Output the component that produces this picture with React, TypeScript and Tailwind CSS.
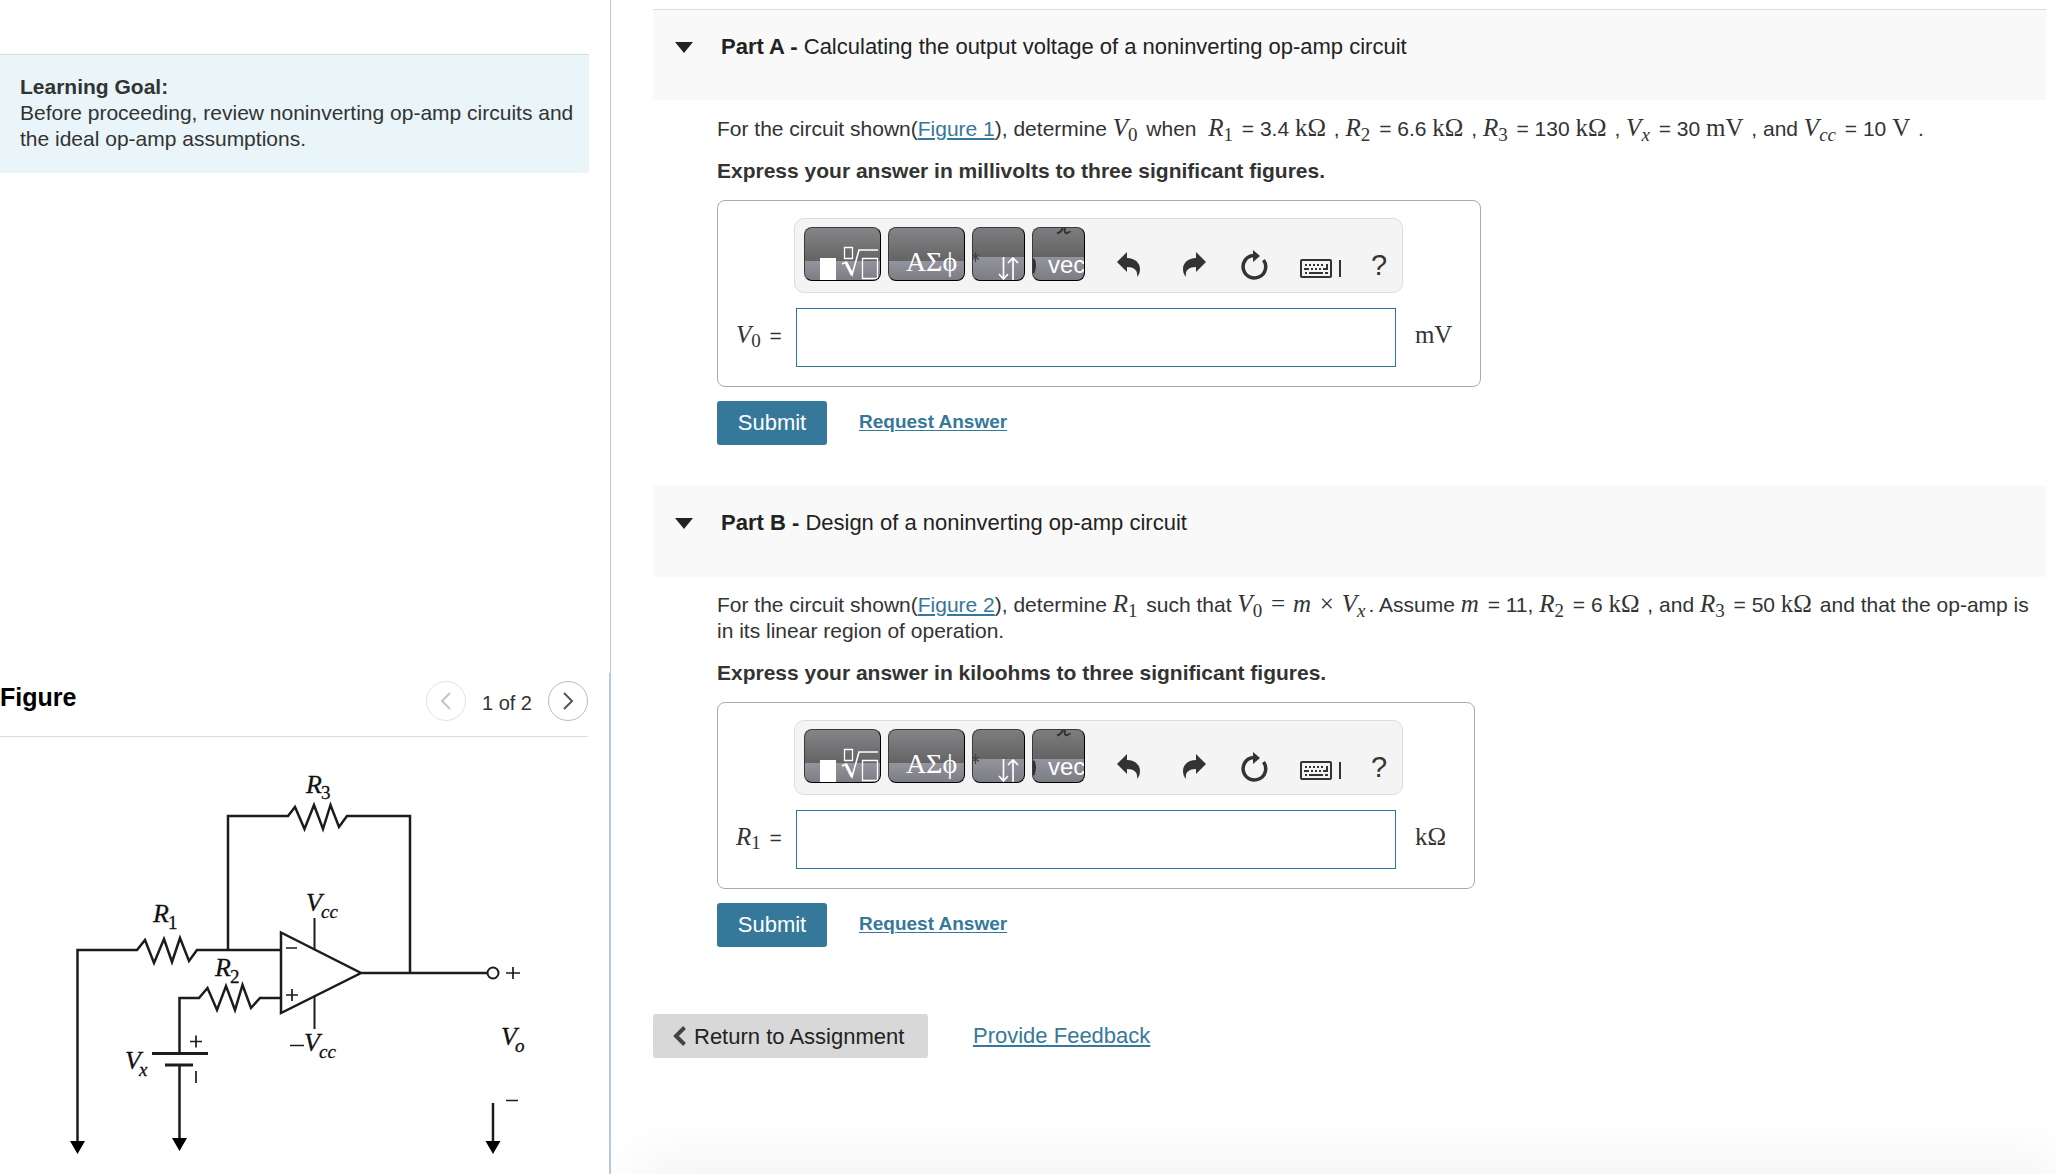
import type { ReactNode } from "react";

const SERIF = "font-['Liberation_Serif','DejaVu_Serif',serif]";

const Var = ({ name, sub, subItalic = false }: { name: string; sub?: string; subItalic?: boolean }) => (
  <span className={`${SERIF} mr-[3px] text-[25px] leading-0 whitespace-nowrap`}>
    <i>{name}</i>
    {sub && <sub className={`text-[19px] ${subItalic ? "italic" : ""}`}>{sub}</sub>}
  </span>
);

const Unit = ({ children }: { children: ReactNode }) => (
  <span className={`${SERIF} mr-[2px] text-[25px] leading-0`}>{children}</span>
);

const UndoIcon = () => (
  <svg width="24" height="26" viewBox="0 0 24 26" fill="#333" aria-hidden="true">
    <path d="M0 10 10 0v6c8 0 13 5 13 11 0 3-1 6-3 8 1-6-2-10-10-10v5z" />
  </svg>
);

const RedoIcon = () => (
  <svg width="24" height="26" viewBox="0 0 24 26" fill="#333" aria-hidden="true">
    <path d="M24 10 14 0v6C6 6 1 11 1 17c0 3 1 6 3 8-1-6 2-10 10-10v5z" />
  </svg>
);

const ResetIcon = () => (
  <svg width="28" height="30" viewBox="0 0 28 30" aria-hidden="true">
    <path d="M13 5.500A11.300 11.300 0 1 0 23.500 10" fill="none" stroke="#333" strokeWidth="3.500" />
    <path d="M13 0 20 6 13 12z" fill="#333" />
  </svg>
);

const KeyboardIcon = () => (
  <svg width="42" height="20" viewBox="0 0 42 20" aria-hidden="true">
    <rect x="1" y="1" width="30" height="17" rx="1" fill="none" stroke="#333" strokeWidth="2" />
    <g stroke="#333" strokeWidth="2">
      <path d="M5 6h19" strokeDasharray="2 2" />
      <path d="M4 10h5M11 10h2M15 10h2M19 10h2M23 10h5M27 5v6" />
      <path d="M5 14h2M9 14h14M25 14h3" />
      <path d="M40 1v17" />
    </g>
  </svg>
);

const TOOL =
  "relative h-[54px] overflow-hidden rounded-lg border border-[#3a3a3a] border-b-black border-r-black text-white";
const WIDE =
  "w-[77px] bg-[linear-gradient(#858589,#636363_64%,#94949f_64%,#7c7c83)]";
const NARROW =
  "w-[53px] bg-[linear-gradient(#7d7d81,#636363_55%,#94949f_55%,#7c7c83)]";

const Toolbar = () => (
  <div className="flex h-[75px] w-[609px] items-start rounded-[10px] border border-[#dcdcdc] bg-[#f4f4f4] pt-2 pl-[9px]">
    <div className="flex gap-[7px]">
      <button aria-label="Templates" className={`${TOOL} ${WIDE}`}>
        <svg width="75" height="52" viewBox="1 1 75 52" aria-hidden="true">
          <path d="M16 31h16v22H16z" fill="#fff" />
          <g fill="none" stroke="#fff">
            <path d="M40.500 20.500h8v11h-8zM58.500 31.500h15v20h-15z" strokeWidth="1.300" />
            <path d="M38 37l4-2 6 13 7-25h19" strokeWidth="1.600" />
            <path d="M42 35.500l6 12" strokeWidth="3" />
          </g>
        </svg>
      </button>
      <button aria-label="Symbols" className={`${TOOL} ${WIDE} ${SERIF} pt-4 pl-[17px] text-left text-[28px] leading-8`}>
        ΑΣϕ
      </button>
      <button aria-label="Arrows" className={`${TOOL} ${NARROW}`}>
        <svg width="51" height="52" viewBox="1 1 51 52" fill="none" aria-hidden="true">
          <path d="M3.500 25v10M0 27.500l7 5M0 32.500l7-5" stroke="#444" strokeWidth="1.300" />
          <path d="M31.500 30v22M27 47l4.500 5 4.500-5M41 53V31M36 36l5-5 5 5" stroke="#fff" strokeWidth="1.700" />
        </svg>
      </button>
      <button aria-label="Vectors" className={`${TOOL} ${NARROW} pt-[22px] pl-[15px] text-left text-[24px] leading-7`}>
        <svg className="absolute top-0 left-0" width="51" height="52" viewBox="1 1 51 52" fill="none" stroke="#333" aria-hidden="true">
          <path d="M25 6.500q4-1 6-5.500M33 1q-1 6 2 5t3-2" strokeWidth="2" />
          <path d="M1 32q3 6 0 14" strokeWidth="3" />
        </svg>
        vec
      </button>
    </div>
    <div className="flex h-16 items-center pt-3 pl-8">
      <button aria-label="Undo"><UndoIcon /></button>
      <button aria-label="Redo" className="ml-[41px]"><RedoIcon /></button>
      <button aria-label="Reset" className="ml-[34px]"><ResetIcon /></button>
      <button aria-label="Keyboard shortcuts" className="ml-8 pt-2"><KeyboardIcon /></button>
      <button aria-label="Help" className="ml-[29px] text-[29px] leading-8">?</button>
    </div>
  </div>
);

const AnswerBox = ({ id, label, unit }: { id: string; label: ReactNode; unit: string }) => (
  <>
    <div className="mt-4 grid w-fit grid-cols-[auto_auto_auto] items-center gap-x-3 gap-y-[15px] rounded-lg border border-[#aaa] pt-[17px] pr-[26px] pb-[19px] pl-[18px]">
      <div className="col-start-2">
        <Toolbar />
      </div>
      <label htmlFor={id} className="col-start-1 pb-1 whitespace-nowrap">
        {label} =
      </label>
      <input id={id} type="text" className="ml-[2px] h-[59px] w-[600px] border border-[#2f7799] bg-white px-3 outline-none" />
      <div className="pb-1"><Unit>{unit}</Unit></div>
    </div>
    <div className="mt-[14px] flex items-center">
      <button className="h-11 w-[110px] rounded-[3px] bg-[#36789a] text-[22px] text-white">Submit</button>
      <a href="#" className="ml-8 pb-[2px] text-[19px] font-bold text-[#36789a] underline underline-offset-2">
        Request Answer
      </a>
    </div>
  </>
);

const PartHeader = ({ part, title, first = false }: { part: string; title: string; first?: boolean }) => (
  <div className={`flex h-[91px] items-start bg-[#f9f9f9] pt-6 pl-[22px] ${first ? "border-t border-[#dcdcdc]" : ""}`}>
    <button aria-label="Collapse" className="pt-2">
      <svg width="18" height="11" viewBox="0 0 18 11" fill="#222" aria-hidden="true">
        <path d="M0 0h18L9 11z" />
      </svg>
    </button>
    <h2 className="ml-7 text-[22px] leading-[26px] text-[#222]">
      <b>{part} -</b> {title}
    </h2>
  </div>
);

const Link = ({ children }: { children: ReactNode }) => (
  <a href="#" className="text-[#36789a] underline decoration-2 underline-offset-2">{children}</a>
);

const Circuit = () => (
  <svg className="block w-full max-w-[588px]" viewBox="0 737 588 430" role="img" aria-label="Noninverting op-amp circuit">
    <g fill="none" stroke="#1c1c1c" strokeWidth="2.500">
      <path d="M228 950V816h60l7-9 9.500 22 9.500-24 9 24 7.500-24 8.500 22 8-11h63v157" />
      <path d="M77.500 1145V950H137l8-10 9 23 10-24 8 23 8-24 9 23 8-11h84" />
      <path d="M179.500 1053V998H199l8.500-10 9.500 22 9-24 9 24 7.500-25 8.500 23 9-10h21" />
      <path d="M179.500 1065v76M493 1103v42" />
      <path d="M152 1053.500h56M165 1065h28" strokeWidth="3" />
      <path d="M281 932.500 361 973l-80 40zM361 973h126.500" />
      <path d="M314.500 918v32M314.500 996v33" strokeWidth="2" />
      <circle cx="493" cy="973" r="5.500" strokeWidth="2" />
      <path d="M506 973h14M513 967v12M286 948h11M286 995h12M292 989v12M190 1041.500h12M196 1035.500v12M196 1071v12M506 1100.500h12M290 1045.500h14" strokeWidth="1.700" />
    </g>
    <path d="M70 1141h15l-7.500 13zM172 1138h15l-7.500 13zM485.500 1141h15l-7.500 13z" fill="#000" />
    <g className={`${SERIF} text-[26px] italic`} fill="#111" stroke="#111" strokeWidth="0.300">
      <text x="306" y="793">R</text>
      <text x="153" y="922">R</text>
      <text x="215" y="976">R</text>
      <text x="306" y="911">V</text>
      <text x="304" y="1051">V</text>
      <text x="501" y="1045">V</text>
      <text x="125" y="1069">V</text>
    </g>
    <g className={`${SERIF} text-[19px]`} fill="#111" stroke="#111" strokeWidth="0.300">
      <text x="321" y="799">3</text>
      <text x="168" y="929">1</text>
      <text x="230" y="983">2</text>
      <text x="321" y="918" fontStyle="italic">cc</text>
      <text x="319" y="1058" fontStyle="italic">cc</text>
      <text x="515" y="1052" fontStyle="italic">o</text>
      <text x="139" y="1076" fontStyle="italic">x</text>
    </g>
  </svg>
);

const Pager = () => (
  <div className="flex items-center gap-4 text-[20px]">
    <button aria-label="Previous figure" disabled className="flex size-10 items-center justify-center rounded-full border border-[#e2e2e2]">
      <svg width="11" height="18" viewBox="0 0 11 18" fill="none" stroke="#c4c4c4" strokeWidth="2" aria-hidden="true">
        <path d="M10 1 2 9l8 8" />
      </svg>
    </button>
    <span className="pt-1 leading-6">1 of 2</span>
    <button aria-label="Next figure" className="flex size-10 items-center justify-center rounded-full border border-[#bbb]">
      <svg width="11" height="18" viewBox="0 0 11 18" fill="none" stroke="#555" strokeWidth="2" aria-hidden="true">
        <path d="M1 1l8 8-8 8" />
      </svg>
    </button>
  </div>
);

const Sidebar = () => (
  <aside className="flex w-[611px] shrink-0 flex-col">
    <div className="h-[673px] border-r border-[#c3c8d8] pt-[54px] pr-[21px]">
      <div className="border-t border-[#d8dcdc] bg-[#e9f5f8] pt-[19px] pr-1 pb-[21px] pl-5 leading-[26px]">
        <b>Learning Goal:</b>
        <p>Before proceeding, review noninverting op-amp circuits and the ideal op-amp assumptions.</p>
      </div>
    </div>
    <div className="flex-1 border-r-2 border-[#b8c8de] pr-[21px]">
      <div className="flex h-16 items-start justify-between border-b border-[#dcdcdc] pt-2">
        <h2 className="text-[25px] leading-8 font-bold text-black">Figure</h2>
        <Pager />
      </div>
      <Circuit />
    </div>
  </aside>
);

export default function App() {
  return (
    <div className="flex min-h-screen bg-white font-['Liberation_Sans',Arial,sans-serif] text-[21px] text-[#333]">
      <Sidebar />
      <main className="min-w-0 flex-1 pt-[9px] pr-[10px] pl-[42px]">
        <section>
          <PartHeader first part="Part A" title="Calculating the output voltage of a noninverting op-amp circuit" />
          <div className="pt-4 pl-16 leading-[26px]">
            <p>
              For the circuit shown(<Link>Figure 1</Link>), determine <Var name="V" sub="0" /> when &nbsp;
              <Var name="R" sub="1" /> = 3.4 <Unit>kΩ</Unit> , <Var name="R" sub="2" /> = 6.6 <Unit>kΩ</Unit> ,{" "}
              <Var name="R" sub="3" /> = 130 <Unit>kΩ</Unit> , <Var name="V" sub="x" subItalic /> = 30 <Unit>mV</Unit> , and{" "}
              <Var name="V" sub="cc" subItalic /> = 10 <Unit>V</Unit> .
            </p>
            <p className="mt-4 font-bold">Express your answer in millivolts to three significant figures.</p>
            <AnswerBox id="v0" label={<Var name="V" sub="0" />} unit="mV" />
          </div>
        </section>

        <section className="mt-[41px]">
          <PartHeader part="Part B" title="Design of a noninverting op-amp circuit" />
          <div className="pt-[15px] pl-16 leading-[26px]">
            <p>
              For the circuit shown(<Link>Figure 2</Link>), determine <Var name="R" sub="1" /> such that{" "}
              <Var name="V" sub="0" /> <Unit>=</Unit> <Var name="m" /> <Unit>×</Unit> <Var name="V" sub="x" subItalic />. Assume{" "}
              <Var name="m" /> = 11, <Var name="R" sub="2" /> = 6 <Unit>kΩ</Unit> , and <Var name="R" sub="3" /> = 50{" "}
              <Unit>kΩ</Unit> and that the op-amp is <span>in its linear region of operation.</span>
            </p>
            <p className="mt-4 font-bold">Express your answer in kiloohms to three significant figures.</p>
            <AnswerBox id="r1" label={<Var name="R" sub="1" />} unit="kΩ" />
          </div>
        </section>

        <div className="mt-[67px] flex items-center text-[22px]">
          <button className="flex h-11 w-[275px] items-center gap-2 rounded-[3px] bg-[#d8d8d8] pl-5 text-[#222]">
            <svg width="13" height="20" viewBox="0 0 13 20" fill="none" stroke="#444" strokeWidth="4" aria-hidden="true">
              <path d="M11.500 1.500 3 10l8.500 8.500" />
            </svg>
            Return to Assignment
          </button>
          <a href="#" className="ml-[45px] pb-[2px] text-[#36789a] underline decoration-2 underline-offset-2">
            Provide Feedback
          </a>
        </div>
      </main>
      {/* soft shadow rising from the bottom edge */}
      <div className="pointer-events-none fixed right-0 -bottom-4 left-[640px] h-4 shadow-[0_0_60px_4px_rgba(0,0,0,0.11)]" />
    </div>
  );
}
